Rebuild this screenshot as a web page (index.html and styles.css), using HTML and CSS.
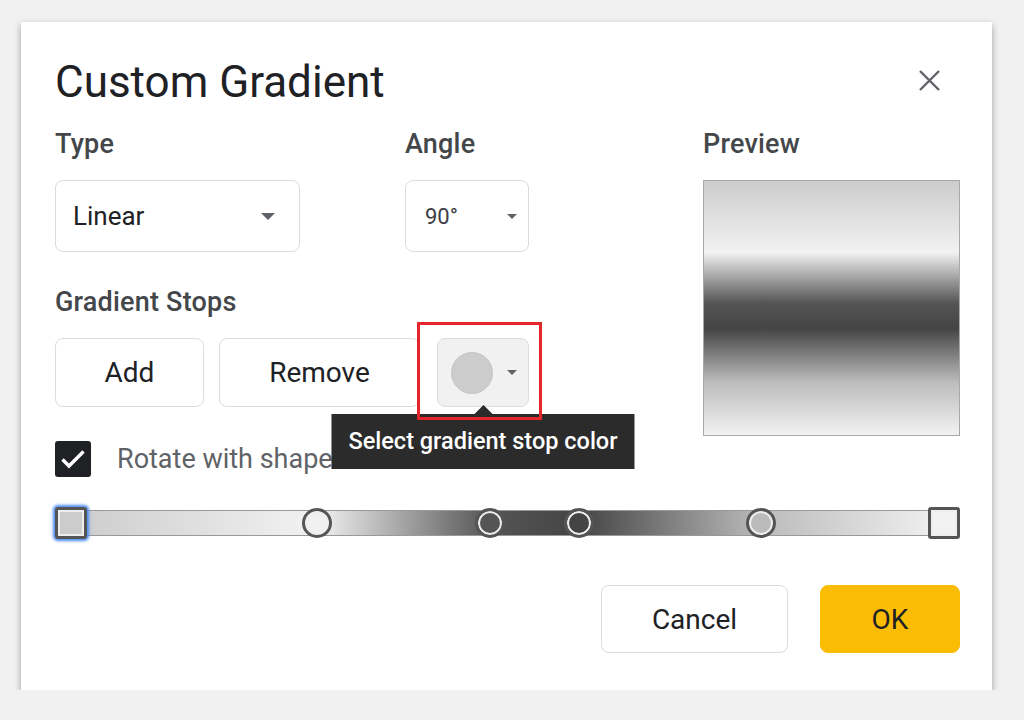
FILE: index.html
```html
<!DOCTYPE html>
<html lang="en">
<head>
<meta charset="utf-8">
<title>Custom Gradient</title>
<link rel="stylesheet" href="styles.css">
</head>
<body>
<div class="dialog">
  <div class="head">
    <h1>Custom Gradient</h1>
    <svg class="close" width="23" height="23" viewBox="0 0 23 23">
      <path d="M2 2L21 21M21 2L2 21" stroke="#5f6368" stroke-width="2.4" fill="none"/>
    </svg>
  </div>

  <div class="body">
    <div class="controls">
      <div class="fields">
        <div class="field field-type">
          <div class="label">Type</div>
          <div class="select select-type">
            <span>Linear</span>
            <i class="caret"></i>
          </div>
        </div>
        <div class="field">
          <div class="label">Angle</div>
          <div class="select select-angle">
            <span>90°</span>
            <i class="caret small"></i>
          </div>
        </div>
      </div>

      <div class="label stops-label">Gradient Stops</div>
      <div class="stop-buttons">
        <button class="btn btn-add">Add</button>
        <button class="btn btn-remove">Remove</button>
        <div class="swatch-wrap">
          <button class="swatch">
            <span class="dot"></span>
            <i class="caret small"></i>
          </button>
          <div class="tip">Select gradient stop color</div>
          <div class="highlight"></div>
        </div>
      </div>

      <label class="check-row">
        <span class="checkbox">
          <svg width="30" height="30" viewBox="0 0 30 30">
            <path d="M4.5 15.5L11 22L25.5 7.5" stroke="#fff" stroke-width="3.4" fill="none"/>
          </svg>
        </span>
        <span class="check-text">Rotate with shape</span>
      </label>
    </div>

    <div class="preview">
      <div class="label">Preview</div>
      <div class="preview-box"></div>
    </div>
  </div>

  <div class="slider">
    <div class="rail">
      <div class="track"></div>
      <span class="handle square focused" style="left:0%;background:#cccccc"></span>
      <span class="handle round" style="left:28.2%;background:#f0f0f0"></span>
      <span class="handle round" style="left:48%;background:#555555"></span>
      <span class="handle round" style="left:58.2%;background:#444444"></span>
      <span class="handle round" style="left:79%;background:#bbbbbb"></span>
      <span class="handle square" style="left:100%;background:#f2f2f2"></span>
    </div>
  </div>

  <div class="actions">
    <button class="btn btn-cancel">Cancel</button>
    <button class="btn btn-ok">OK</button>
  </div>
</div>
</body>
</html>
```

FILE: styles.css
```css
body
        {
        margin:0;
        padding:22px 0 0 21px;
        background:#f1f1f1;
        font-family:Roboto, "Liberation Sans", Arial, sans-serif;
        color:#202124;
        }
.dialog
        {
        width:971px;
        box-sizing:border-box;
        padding:34px 32px 37px 34px;
        background:#fff;
        box-shadow:0 3px 7px rgba(0,0,0,.35);
        }
.head
        {
        display:flex;
        justify-content:space-between;
        align-items:flex-start;
        height:52px;
        }
h1
        {
        margin:0;
        font-size:44px;
        line-height:52px;
        font-weight:400;
        color:#202124;
        }
.close
        {
        margin:13px 19px 0 0;
        }
.body
        {
        display:flex;
        margin-top:21px;
        }
.controls
        {
        flex:1;
        }
.label
        {
        font-size:27px;
        line-height:30px;
        font-weight:500;
        letter-spacing:0.2px;
        color:#44474a;
        }
.fields
        {
        display:flex;
        }
.field-type
        {
        width:350px;
        }
.field .label
        {
        margin-bottom:21px;
        }
.select
        {
        display:flex;
        align-items:center;
        justify-content:space-between;
        box-sizing:border-box;
        height:72px;
        border:1px solid #dadce0;
        border-radius:8px;
        color:#202124;
        }
.select-type
        {
        width:245px;
        padding:0 24px 0 17px;
        font-size:26px;
        }
.select-angle
        {
        width:124px;
        padding:0 11px 0 19px;
        font-size:22px;
        color:#3c4043;
        }
.caret
        {
        width:0;
        height:0;
        border-left:7px solid transparent;
        border-right:7px solid transparent;
        border-top:7px solid #5f6368;
        }
.caret.small
        {
        border-left-width:5px;
        border-right-width:5px;
        border-top-width:5px;
        }
.stops-label
        {
        margin-top:35px;
        }
.stop-buttons
        {
        display:flex;
        margin-top:21px;
        }
.btn
        {
        box-sizing:border-box;
        height:69px;
        margin:0;
        padding:0;
        border:1px solid #dadce0;
        border-radius:8px;
        background:#fff;
        font-family:Roboto, "Liberation Sans", Arial, sans-serif;
        font-size:28px;
        color:#202124;
        }
.btn-add
        {
        width:149px;
        }
.btn-remove
        {
        width:201px;
        margin-left:15px;
        }
.swatch-wrap
        {
        position:relative;
        margin-left:17px;
        }
.swatch
        {
        display:flex;
        align-items:center;
        box-sizing:border-box;
        width:92px;
        height:69px;
        padding:0 0 0 13px;
        border:1px solid #dadce0;
        border-radius:8px;
        background:#f1f1f1;
        }
.dot
        {
        box-sizing:border-box;
        width:42px;
        height:42px;
        border-radius:50%;
        background:#cccccc;
        border:1px solid #c4c4c4;
        margin-right:14px;
        }
.tip
        {
        position:absolute;
        z-index:2;
        left:50%;
        top:76px;
        transform:translateX(-50%);
        height:55px;
        padding:0 17px;
        background:#2b2b2b;
        color:#fff;
        font-size:23.5px;
        font-weight:500;
        line-height:55px;
        white-space:nowrap;
        }
.tip:before
        {
        content:"";
        position:absolute;
        left:50%;
        top:-9px;
        margin-left:-9px;
        border-left:9px solid transparent;
        border-right:9px solid transparent;
        border-bottom:9px solid #2b2b2b;
        }
.highlight
        {
        position:absolute;
        z-index:3;
        left:-20px;
        right:-13px;
        top:-16px;
        bottom:-13px;
        border:3px solid #e3262c;
        }
.check-row
        {
        display:flex;
        align-items:center;
        margin-top:34px;
        height:36px;
        }
.checkbox
        {
        display:flex;
        align-items:center;
        justify-content:center;
        width:36px;
        height:36px;
        border-radius:3px;
        background:#202124;
        }
.check-text
        {
        margin-left:26px;
        font-size:27px;
        color:#5f6368;
        }
.preview
        {
        flex:0 0 257px;
        }
.preview .label
        {
        margin-bottom:21px;
        }
.preview-box
        {
        box-sizing:border-box;
        height:256px;
        border:1px solid #a8a8a8;
        background:linear-gradient(to bottom, #cccccc 0%, #f2f2f2 28%, #555555 48%, #444444 58%, #bbbbbb 79%, #f2f2f2 100%);
        }
.slider
        {
        margin-top:30px;
        padding:0 16px;
        }
.rail
        {
        position:relative;
        height:32px;
        }
.track
        {
        box-sizing:border-box;
        height:26px;
        position:relative;
        top:3px;
        border:1px solid #999;
        border-left:0;
        border-right:0;
        background:linear-gradient(to right, #cccccc 0%, #f2f2f2 28.2%, #555555 48%, #444444 58.2%, #bbbbbb 79%, #f2f2f2 100%);
        }
.handle
        {
        position:absolute;
        box-sizing:border-box;
        transform:translateX(-50%);
        border:3px solid #555;
        box-shadow:inset 0 0 0 2px #eee;
        }
.handle.square
        {
        top:0;
        width:32px;
        height:32px;
        border-radius:3px;
        }
.handle.square.focused
        {
        box-shadow:inset 0 0 0 2px #eee, 0 0 3px 2px #4a8af4;
        }
.handle.round
        {
        top:1px;
        width:30px;
        height:30px;
        border-radius:50%;
        }
.actions
        {
        display:flex;
        justify-content:flex-end;
        margin-top:46px;
        }
.btn-cancel
        {
        width:187px;
        height:68px;
        }
.btn-ok
        {
        width:140px;
        height:68px;
        margin-left:32px;
        border-color:#fbbc04;
        background:#fbbc04;
        }
```
